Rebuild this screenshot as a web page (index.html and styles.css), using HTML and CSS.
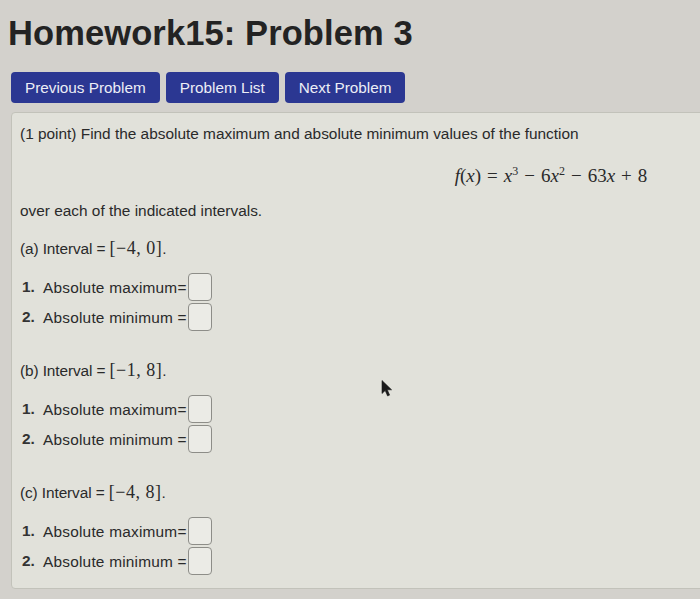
FILE: index.html
```html
<!DOCTYPE html>
<html>
<head>
<meta charset="utf-8">
<link rel="stylesheet" href="styles.css">
</head>
<body>
<div class="page">
  <h1 class="title">Homework15: Problem 3</h1>
  <div class="nav">
    <span class="btn">Previous Problem</span>
    <span class="btn">Problem List</span>
    <span class="btn">Next Problem</span>
  </div>
  <div class="well">
    <p class="intro">(1 point) Find the absolute maximum and absolute minimum values of the function</p>
    <div class="display">
      <span class="math"><i>f</i>(<i>x</i>)<span class="op">=</span><i>x</i><sup>3</sup><span class="op">−</span>6<i>x</i><sup>2</sup><span class="op">−</span>63<i>x</i><span class="op">+</span>8</span>
    </div>
    <p class="over">over each of the indicated intervals.</p>

    <div class="part first">
      <p class="head">(a) Interval = <span class="imath">[−4, 0]</span>.</p>
      <div class="items">
        <div class="item"><span class="num">1.</span><span class="lab">Absolute maximum=</span><span class="box"></span></div>
        <div class="item"><span class="num">2.</span><span class="lab">Absolute minimum =</span><span class="box"></span></div>
      </div>
    </div>

    <div class="part">
      <p class="head">(b) Interval = <span class="imath">[−1, 8]</span>.</p>
      <div class="items">
        <div class="item"><span class="num">1.</span><span class="lab">Absolute maximum=</span><span class="box"></span></div>
        <div class="item"><span class="num">2.</span><span class="lab">Absolute minimum =</span><span class="box"></span></div>
      </div>
    </div>

    <div class="part">
      <p class="head">(c) Interval = <span class="imath">[−4, 8]</span>.</p>
      <div class="items">
        <div class="item"><span class="num">1.</span><span class="lab">Absolute maximum=</span><span class="box"></span></div>
        <div class="item"><span class="num">2.</span><span class="lab">Absolute minimum =</span><span class="box"></span></div>
      </div>
    </div>
  </div>
  <svg class="cursor" width="12" height="17" viewBox="0 0 12 17"><path d="M1 0.5 L1 13.5 L4.2 10.6 L6.6 16 L8.6 15.1 L6.3 9.8 L10.6 9.8 Z" fill="#1a1a1a" stroke="#1a1a1a" stroke-width="0.6" stroke-linejoin="round"/></svg>
</div>
</body>
</html>
```
FILE: styles.css
```css
html, body {
  margin: 0;
  padding: 0;
  overflow: hidden;
  background: #d3d1cc;
}
body {
  width: 700px;
  height: 599px;
  font-family: "Liberation Sans", Arial, sans-serif;
  color: #2a2a2a;
}
.page {
  position: relative;
  padding: 13px 0 0 10px;
}
.title {
  margin: 0 0 0 -2px;
  font-size: 34.5px;
  line-height: 40px;
  font-weight: bold;
  color: #232323;
  letter-spacing: 0.1px;
}
.nav {
  display: flex;
  gap: 6px;
  margin-top: 19px;
  margin-left: 1px;
}
.btn {
  display: flex;
  align-items: center;
  height: 31px;
  padding: 0 14px;
  background: #2b3792;
  color: #eceef6;
  font-size: 15.3px;
  border-radius: 4px;
}
.well {
  margin-top: 9px;
  margin-left: 1px;
  width: 1062px;
  padding: 11px 8px 13px 8px;
  background: #e1e1da;
  border: 1px solid #c2c2ba;
  border-radius: 4px;
  font-size: 15.4px;
  line-height: 20px;
}
.well p {
  margin: 0;
}
.display {
  margin-top: 20px;
  height: 24px;
  line-height: 24px;
  text-align: center;
}
.math {
  font-family: "Liberation Serif", "Times New Roman", serif;
  font-size: 19px;
  color: #2a2a2a;
}
.math sup {
  font-size: 12px;
  line-height: 0;
  vertical-align: 7px;
}
.op {
  padding: 0 6px;
}
.over {
  margin-top: 13px !important;
}
.part {
  margin-top: 29px;
}
.part.first {
  margin-top: 17px;
}
.head {
  letter-spacing: -0.1px;
}
.imath {
  font-family: "Liberation Serif", "Times New Roman", serif;
  font-size: 18px;
  letter-spacing: 0.5px;
}
.items {
  display: flex;
  flex-direction: column;
  gap: 1px;
  margin-top: 13px;
}
.item {
  display: flex;
  align-items: center;
  height: 29px;
  padding-left: 2px;
}
.num {
  width: 21px;
  font-weight: bold;
  color: #333;
}
.lab {
  padding-top: 3px;
  letter-spacing: 0.22px;
}
.box {
  width: 22px;
  height: 26px;
  border: 1.5px solid #8d8d88;
  border-radius: 4px;
  background: #ebebe6;
  margin-left: 1px;
}
.cursor {
  position: absolute;
  left: 381px;
  top: 380px;
}
```
